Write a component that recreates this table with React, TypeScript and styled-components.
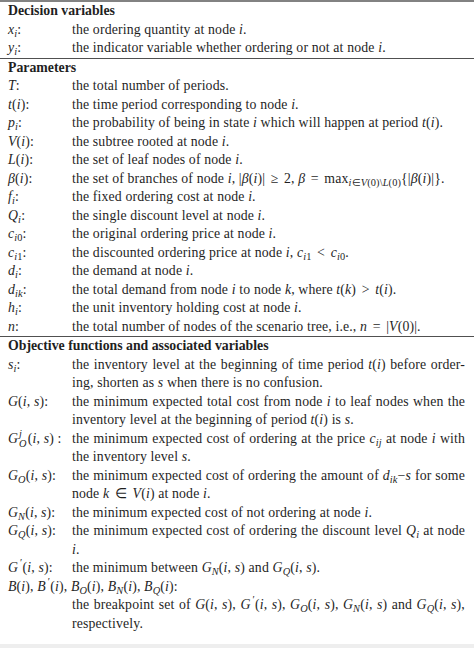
import { Fragment, ReactNode } from "react";
import styled, { createGlobalStyle, css } from "styled-components";

const GlobalStyle = createGlobalStyle`
  html, body {
    margin: 0;
    padding: 0;
    background: #fff;
  }
  body {
    font-family: "Liberation Serif", "Times New Roman", serif;
    color: #1f1f1f;
  }
`;

const Page = styled.div`
  width: 474px;
  min-height: 648px;
  display: flex;
  flex-direction: column;
`;

const Table = styled.div`
  border-top: 2px solid #828282;
  font-size: 13.8px;
  line-height: 18.5px;
  letter-spacing: 0.14px;
`;

const Section = styled.section`
  & + & {
    border-top: 1px solid #505050;
  }
`;

const Header = styled.div`
  font-weight: bold;
  letter-spacing: 0;
  padding: 0 9px 0 8px;
`;

const Entry = styled.div<{ $wide?: boolean }>`
  display: flex;
  flex-direction: ${(p) => (p.$wide ? "column" : "row")};
  padding: 0 9px 0 8px;
`;

const Label = styled.div`
  flex: 0 0 auto;
  min-width: 64px;
  white-space: nowrap;
`;

const Desc = styled.div<{ $indent?: boolean }>`
  flex: 1;
  min-width: 0;
  margin-left: ${(p) => (p.$indent ? "64px" : "0")};
`;

const Line = styled.div<{ $fill?: boolean }>`
  white-space: nowrap;
  ${(p) =>
    p.$fill &&
    css`
      text-align: justify;
      text-align-last: justify;
    `}
`;

const Band = styled.div`
  margin-top: auto;
  height: 4px;
  background: #eeeeee;
`;

const M = styled.span`
  font-style: italic;
`;

const Up = styled.span`
  font-style: normal;
`;

// spaced relation sign, as TeX puts thick space around = < >
const Rel = styled.span`
  font-style: normal;
  padding: 0 2px;
`;

const Sub = styled.sub`
  font-size: 0.75em;
  line-height: 0;
  vertical-align: -0.3em;
`;

const Sup = styled.sup<{ $gap?: boolean }>`
  font-size: 0.75em;
  line-height: 0;
  vertical-align: 0.55em;
  margin-left: ${(p) => (p.$gap ? "2px" : "0")};
`;

// superscript and subscript stacked in one cell
const SubSup = styled.span`
  display: inline-grid;
  font-size: 0.75em;
  line-height: 1;
  font-style: italic;
  margin-left: 1px;
  margin-right: 1px;
`;

const Script = styled.span<{ $up?: boolean }>`
  grid-area: 1 / 1;
  position: relative;
  top: ${(p) => (p.$up ? "-0.5em" : "0.45em")};
`;

// digits stay upright, letters go italic
function tok(s: string) {
  return /^[0-9]+$/.test(s) ? <Up>{s}</Up> : <M>{s}</M>;
}

function mixed(s: string) {
  return s.split(/([0-9]+)/).filter(Boolean).map((p, i) => <Fragment key={i}>{tok(p)}</Fragment>);
}

interface SymProps {
  n: string;
  sub?: string;
  sup?: string;
  prime?: boolean;
  args?: string[];
}

function Sym({ n, sub, sup, prime, args }: SymProps) {
  return (
    <>
      <M>{n}</M>
      {sub && sup ? (
        <SubSup>
          <Script $up>{sup}</Script>
          <Script>{sub}</Script>
        </SubSup>
      ) : sub ? (
        <Sub>{mixed(sub)}</Sub>
      ) : null}
      {prime && <Sup $gap>′</Sup>}
      {args && (
        <>
          <Up>(</Up>
          {args.map((a, i) => (
            <Fragment key={i}>
              {i > 0 && <Up>, </Up>}
              {tok(a)}
            </Fragment>
          ))}
          <Up>)</Up>
        </>
      )}
    </>
  );
}

const Gis = (p: Omit<SymProps, "n" | "args">) => <Sym n="G" args={["i", "s"]} {...p} />;

interface Row {
  label: ReactNode;
  lines: ReactNode[];
  wide?: boolean;
}

function Rows({ rows }: { rows: Row[] }) {
  return (
    <>
      {rows.map((r, i) => (
        <Entry key={i} $wide={r.wide}>
          <Label>{r.label}</Label>
          <Desc $indent={r.wide}>
            {r.lines.map((l, j) => (
              <Line key={j} $fill={j < r.lines.length - 1}>
                {l}
              </Line>
            ))}
          </Desc>
        </Entry>
      ))}
    </>
  );
}

const i = <M>i</M>;
const s = <M>s</M>;

const decision: Row[] = [
  { label: <><Sym n="x" sub="i" />:</>, lines: [<>the ordering quantity at node {i}.</>] },
  { label: <><Sym n="y" sub="i" />:</>, lines: [<>the indicator variable whether ordering or not at node {i}.</>] },
];

const params: Row[] = [
  { label: <><M>T</M>:</>, lines: [<>the total number of periods.</>] },
  { label: <><Sym n="t" args={["i"]} />:</>, lines: [<>the time period corresponding to node {i}.</>] },
  {
    label: <><Sym n="p" sub="i" />:</>,
    lines: [<>the probability of being in state {i} which will happen at period <Sym n="t" args={["i"]} />.</>],
  },
  { label: <><Sym n="V" args={["i"]} />:</>, lines: [<>the subtree rooted at node {i}.</>] },
  { label: <><Sym n="L" args={["i"]} />:</>, lines: [<>the set of leaf nodes of node {i}.</>] },
  {
    label: <><Sym n="β" args={["i"]} />:</>,
    lines: [
      <>
        the set of branches of node {i}, |<Sym n="β" args={["i"]} />| <Rel>≥</Rel> 2, <M>β</M> <Rel>=</Rel> max
        <Sub>
          <M>i</M>∈<M>V</M>(0)\<M>L</M>(0)
        </Sub>
        {"{"}|<Sym n="β" args={["i"]} />|{"}"}.
      </>,
    ],
  },
  { label: <><Sym n="f" sub="i" />:</>, lines: [<>the fixed ordering cost at node {i}.</>] },
  { label: <><Sym n="Q" sub="i" />:</>, lines: [<>the single discount level at node {i}.</>] },
  { label: <><Sym n="c" sub="i0" />:</>, lines: [<>the original ordering price at node {i}.</>] },
  {
    label: <><Sym n="c" sub="i1" />:</>,
    lines: [<>the discounted ordering price at node {i}, <Sym n="c" sub="i1" /> <Rel>&lt;</Rel> <Sym n="c" sub="i0" />.</>],
  },
  { label: <><Sym n="d" sub="i" />:</>, lines: [<>the demand at node {i}.</>] },
  {
    label: <><Sym n="d" sub="ik" />:</>,
    lines: [
      <>
        the total demand from node {i} to node <M>k</M>, where <Sym n="t" args={["k"]} /> <Rel>&gt;</Rel>{" "}
        <Sym n="t" args={["i"]} />.
      </>,
    ],
  },
  { label: <><Sym n="h" sub="i" />:</>, lines: [<>the unit inventory holding cost at node {i}.</>] },
  {
    label: <><M>n</M>:</>,
    lines: [<>the total number of nodes of the scenario tree, i.e., <M>n</M> <Rel>=</Rel> |<Sym n="V" args={["0"]} />|.</>],
  },
];

const objective: Row[] = [
  {
    label: <><Sym n="s" sub="i" />:</>,
    lines: [
      <>the inventory level at the beginning of time period <Sym n="t" args={["i"]} /> before order-</>,
      <>ing, shorten as {s} when there is no confusion.</>,
    ],
  },
  {
    label: <><Gis />:</>,
    lines: [
      <>the minimum expected total cost from node {i} to leaf nodes when the</>,
      <>inventory level at the beginning of period <Sym n="t" args={["i"]} /> is {s}.</>,
    ],
  },
  {
    label: <><Gis sub="O" sup="j" /> :</>,
    lines: [
      <>the minimum expected cost of ordering at the price <Sym n="c" sub="ij" /> at node {i} with</>,
      <>the inventory level {s}.</>,
    ],
  },
  {
    label: <><Gis sub="O" />:</>,
    lines: [
      <>the minimum expected cost of ordering the amount of <Sym n="d" sub="ik" />−{s} for some</>,
      <>node <M>k</M> <Rel>∈</Rel> <Sym n="V" args={["i"]} /> at node {i}.</>,
    ],
  },
  { label: <><Gis sub="N" />:</>, lines: [<>the minimum expected cost of not ordering at node {i}.</>] },
  {
    label: <><Gis sub="Q" />:</>,
    lines: [<>the minimum expected cost of ordering the discount level <Sym n="Q" sub="i" /> at node</>, <>{i}.</>],
  },
  {
    label: <><Gis prime />:</>,
    lines: [<>the minimum between <Gis sub="N" /> and <Gis sub="Q" />.</>],
  },
  {
    wide: true,
    label: (
      <>
        <Sym n="B" args={["i"]} />, <Sym n="B" prime args={["i"]} />, <Sym n="B" sub="O" args={["i"]} />,{" "}
        <Sym n="B" sub="N" args={["i"]} />, <Sym n="B" sub="Q" args={["i"]} />:
      </>
    ),
    lines: [
      <>
        the breakpoint set of <Gis />, <Gis prime />, <Gis sub="O" />, <Gis sub="N" /> and <Gis sub="Q" />,
      </>,
      <>respectively.</>,
    ],
  },
];

export default function App() {
  return (
    <>
      <GlobalStyle />
      <Page>
        <Table>
          <Section>
            <Header>Decision variables</Header>
            <Rows rows={decision} />
          </Section>
          <Section>
            <Header>Parameters</Header>
            <Rows rows={params} />
          </Section>
          <Section>
            <Header>Objective functions and associated variables</Header>
            <Rows rows={objective} />
          </Section>
        </Table>
        <Band />
      </Page>
    </>
  );
}
